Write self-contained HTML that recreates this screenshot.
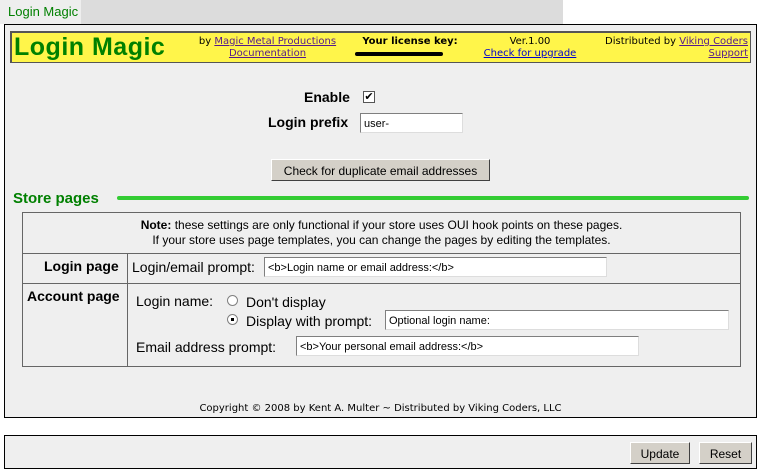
<!DOCTYPE html>
<html><head><style>
*{margin:0;padding:0;box-sizing:border-box}
body{width:761px;height:473px;background:#fff;font-family:"Liberation Sans",sans-serif;position:relative;overflow:hidden;font-size:13px}
.a{position:absolute}
.v{font-family:"DejaVu Sans",sans-serif}
a{color:#551a8b}
.inp{position:absolute;background:#fff;border:1px solid #7f7f7f;border-right-color:#ddd;border-bottom-color:#ddd;font-size:11px;padding:4px 0 0 3px;height:20px}
.btn{position:absolute;background:#d4d0c8;border:1px solid;border-color:#fff #404040 #404040 #fff;font-size:12px;text-align:center;line-height:22px}
.rad{position:absolute;width:11px;height:11px;border-radius:50%;background:#fff;border:1px solid #808080}
</style></head><body>
<div class="a" style="left:0;top:0;width:563px;height:24px;background:#dcdcdc"></div>
<div class="a" style="left:0;top:0;width:81px;height:24px;background:#eee;color:#008000;font-size:13px;padding:4px 0 0 8px">Login Magic</div>
<div class="a" style="left:4px;top:24px;width:753px;height:394px;background:#efefef;border:1px solid #000"></div>
<div class="a" style="left:10px;top:31px;width:741px;height:32px;background:#fff54a;border:1px solid #555;border-width:2px 1px 1px 2px"></div>
<div class="a" style="left:14px;top:33px;font-size:25px;font-weight:bold;color:#008000;letter-spacing:0.5px">Login Magic</div>
<div class="a v" style="left:190px;top:36px;width:155px;text-align:center;font-size:10px;line-height:12px">by <a href="#">Magic Metal Productions</a><br><a href="#">Documentation</a></div>
<div class="a v" style="left:350px;top:36px;width:120px;text-align:center;font-size:10px;font-weight:bold;white-space:nowrap">Your license key:</div>
<div class="a" style="left:355px;top:52px;width:88px;height:4px;background:#000;border-radius:2px"></div>
<div class="a v" style="left:480px;top:36px;width:100px;text-align:center;font-size:10px;line-height:12px">Ver.1.00<br><a href="#" style="color:#00c">Check for upgrade</a></div>
<div class="a v" style="left:590px;top:36px;width:158px;text-align:right;font-size:10px;line-height:12px">Distributed by <a href="#">Viking Coders</a><br><a href="#">Support</a></div>
<div class="a" style="left:304px;top:89px;font-weight:bold;font-size:14px">Enable</div>
<div class="a" style="left:363px;top:91px;width:12px;height:12px;background:#fff;border:1px solid #555;font-size:11px;line-height:10px;text-align:center">✔</div>
<div class="a" style="left:268px;top:114px;font-weight:bold;font-size:14px">Login prefix</div>
<div class="inp" style="left:360px;top:113px;width:103px">user-</div>
<div class="btn" style="left:271px;top:159px;width:219px;height:22px">Check for duplicate email addresses</div>
<div class="a" style="left:13px;top:190px;font-weight:bold;font-size:15px;color:#008000">Store pages</div>
<div class="a" style="left:117px;top:196px;width:632px;height:4px;background:#3c3;border-radius:2px"></div>
<div class="a" style="left:22px;top:212px;width:719px;height:155px;border:1px solid #666"></div>
<div class="a" style="left:22px;top:253px;width:719px;height:1px;background:#666"></div>
<div class="a" style="left:22px;top:283px;width:719px;height:1px;background:#666"></div>
<div class="a" style="left:127px;top:253px;width:1px;height:114px;background:#666"></div>
<div class="a" style="left:22px;top:218px;width:719px;text-align:center;font-size:12px;line-height:15px"><b>Note:</b> these settings are only functional if your store uses OUI hook points on these pages.<br>If your store uses page templates, you can change the pages by editing the templates.</div>
<div class="a" style="left:44px;top:258px;font-weight:bold;font-size:14px">Login page</div>
<div class="a" style="left:27px;top:288px;font-weight:bold;font-size:14px">Account page</div>
<div class="a" style="left:132px;top:259px;font-size:14px">Login/email prompt:</div>
<div class="inp" style="left:264px;top:257px;width:343px">&lt;b&gt;Login name or email address:&lt;/b&gt;</div>
<div class="a" style="left:136px;top:293px;font-size:14px">Login name:</div>
<div class="rad" style="left:227px;top:295px"></div>
<div class="a" style="left:246px;top:294px;font-size:14px">Don't display</div>
<div class="rad" style="left:227px;top:314px"><div class="a" style="left:3px;top:3px;width:3px;height:3px;background:#000"></div></div>
<div class="a" style="left:246px;top:313px;font-size:14px">Display with prompt:</div>
<div class="inp" style="left:385px;top:310px;width:344px">Optional login name:</div>
<div class="a" style="left:136px;top:339px;font-size:14px">Email address prompt:</div>
<div class="inp" style="left:296px;top:336px;width:343px">&lt;b&gt;Your personal email address:&lt;/b&gt;</div>
<div class="a v" style="left:4px;top:403px;width:753px;text-align:center;font-size:10px">Copyright © 2008 by Kent A. Multer ~ Distributed by Viking Coders, LLC</div>
<div class="a" style="left:4px;top:435px;width:753px;height:34px;background:#efefef;border:1px solid #000"></div>
<div class="btn" style="left:630px;top:442px;width:60px;height:22px">Update</div>
<div class="btn" style="left:699px;top:442px;width:53px;height:22px">Reset</div>
</body></html>
